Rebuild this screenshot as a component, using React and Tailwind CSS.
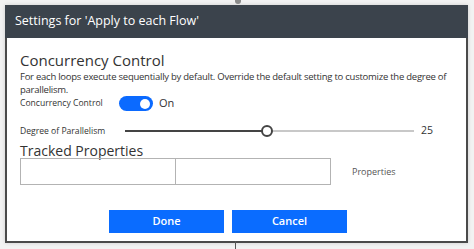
import React, { useState } from "react";

const font = { fontFamily: '"Open Sans", "Noto Sans", sans-serif' };

export default function App() {
  const [on, setOn] = useState(true);
  const [degree, setDegree] = useState(25);
  const pct = ((degree - 1) / 49) * 100;

  return (
    <div className="w-[474px] h-[249px] bg-[#f2f2f2] relative overflow-hidden" style={font}>
      {/* connector lines of the flow */}
      <div className="absolute left-[235px] top-0 w-[6px] h-[4px] rounded-b-full bg-[#8a8a8a]" />
      <div className="absolute left-[235px] bottom-0 w-[1px] h-[8px] bg-[#555]" />

      <div className="pt-[5px] pl-[5px]">
        <div className="w-[463px] h-[238px] bg-white border-2 border-t-0 border-[#4a4a4a] shadow-[0_0_4px_rgba(0,0,0,0.15)] flex flex-col">
          <div className="h-[33px] -mx-[2px] bg-[#3b434c] flex items-center pl-[10px] text-white text-[12.5px]">
            Settings for 'Apply to each Flow'
          </div>

          <div className="px-[13px] pt-[12px] text-[#333]">
            <div className="text-[15px] leading-[21px]">Concurrency Control</div>
            <div className="text-[9.5px] leading-[13px] tracking-[-0.25px] -mt-[1px]">
              For each loops execute sequentially by default. Override the default setting to customize the degree of parallelism.
            </div>
            <div className="flex items-center h-[15px] text-[8.6px]">
              <span className="w-[99px] shrink-0">Concurrency Control</span>
              <button
                onClick={() => setOn(!on)}
                className="w-[34px] h-[15px] shrink-0 rounded-full bg-[#0b6aff] flex items-center justify-end px-[3px]"
              >
                <span className="w-[10px] h-[10px] rounded-full bg-white" />
              </button>
              <span className="ml-[6px] text-[11px]">{on ? "On" : "Off"}</span>
            </div>

            <div className="flex items-center h-[16px] mt-[12px] text-[8.6px]">
              <span className="w-[105px] shrink-0">Degree of Parallelism</span>
              <div className="relative w-[289px] h-[12px] flex items-center">
                <div className="w-full h-[2px] bg-[#c8c8c8]" />
                <div className="absolute left-0 h-[2px] bg-[#444]" style={{ width: `${pct}%` }} />
                <div
                  className="absolute w-[12px] h-[12px] rounded-full bg-white border-2 border-[#444] -ml-[6px]"
                  style={{ left: `${pct}%` }}
                />
              </div>
              <span className="ml-[7px] text-[10.5px]">{degree}</span>
            </div>

            <div className="text-[14px] leading-[19px] mt-[2px]">Tracked Properties</div>
            <div className="flex items-center -mt-[2px]">
              <div className="flex h-[27px] w-[311px] border border-[#b3b3b3]">
                <input className="w-[155px] border-r border-[#b3b3b3] outline-none" />
                <input className="flex-1 outline-none" />
              </div>
              <span className="ml-[21px] text-[9px] text-[#555]">Properties</span>
            </div>

            <div className="flex gap-[8px] mt-[25px] ml-[89px]">
              <button className="w-[115px] h-[23px] bg-[#0a6cff] text-white text-[11px] font-semibold">Done</button>
              <button className="w-[115px] h-[23px] bg-[#0a6cff] text-white text-[11px] font-semibold">Cancel</button>
            </div>
          </div>
        </div>
      </div>
    </div>
  );
}
